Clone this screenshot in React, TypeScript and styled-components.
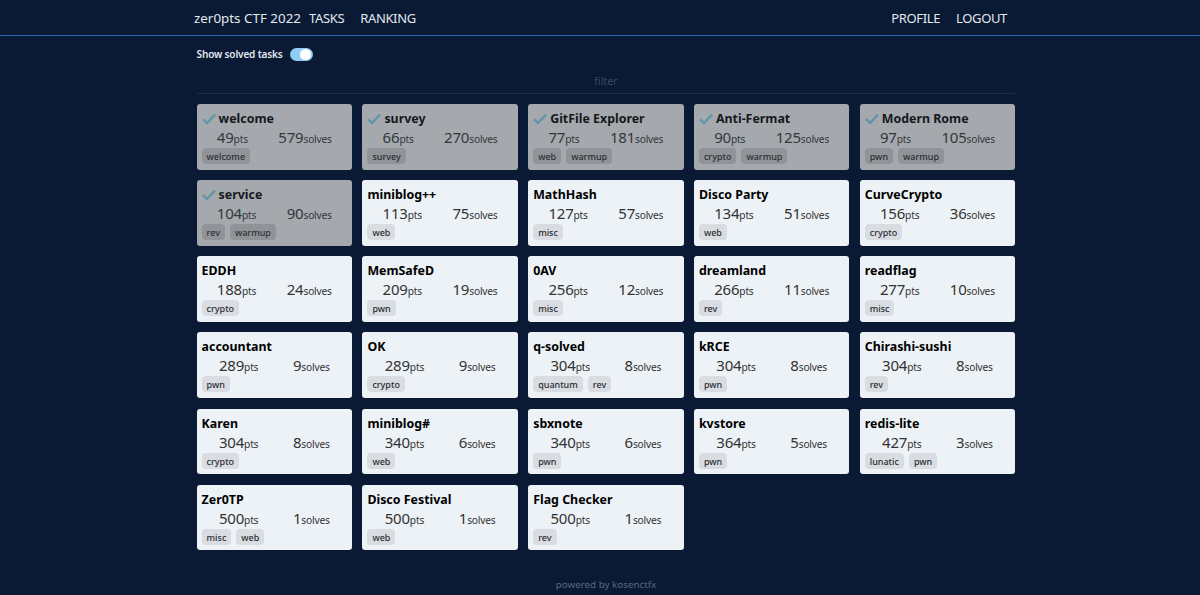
import React from "react";
import styled, { createGlobalStyle } from "styled-components";

const Global = createGlobalStyle`
  html, body { margin: 0; padding: 0; background: #0a1a34; }
  body { font-family: "Noto Sans", "Open Sans", "Liberation Sans", sans-serif; }
  * { box-sizing: border-box; }
`;

const Page = styled.div`
  width: 1200px;
  height: 595px;
  overflow: hidden;
  background: #0a1a34;
  color: #e2e8f0;
  display: flex;
  flex-direction: column;
`;

const NavBar = styled.nav`
  height: 36px;
  flex: none;
  border-bottom: 1px solid #2b6cb0;
  padding: 0 185px 0 194px;
  display: flex;
  align-items: center;
  justify-content: space-between;
`;

const NavGroup = styled.div`
  display: flex;
`;

const Brand = styled.a`
  font-size: 13.4px;
  line-height: 36px;
  color: #e2e8f0;
  white-space: nowrap;
`;

const NavLink = styled.a`
  padding: 0 8px;
  font-size: 13px;
  letter-spacing: -0.35px;
  line-height: 36px;
  color: #e2e8f0;
  white-space: nowrap;
`;

const Main = styled.main`
  width: 818.6px;
  margin-left: 196.6px;
  flex: 1;
  display: flex;
  flex-direction: column;
`;

const ToggleRow = styled.label`
  height: 36px;
  display: flex;
  align-items: center;
  gap: 7px;
  font-size: 10px;
  letter-spacing: -0.15px;
  font-weight: 600;
  color: #e2e8f0;
`;

const Toggle = styled.span`
  position: relative;
  width: 23px;
  height: 13px;
  border-radius: 7px;
  background: #90cdf4;
  &::after {
    content: "";
    position: absolute;
    right: 1.5px;
    top: 1px;
    width: 11px;
    height: 11px;
    border-radius: 50%;
    background: #fff;
  }
`;

const FilterBox = styled.div`
  height: 22px;
  border-bottom: 1px solid #1f2d44;
  text-align: center;
  font-size: 10.5px;
  line-height: 18px;
  color: #3a4658;
`;

const Grid = styled.div`
  margin-top: 10.2px;
  display: grid;
  grid-template-columns: repeat(5, 155.4px);
  column-gap: 10.4px;
  row-gap: 10.3px;
`;

const Card = styled.div<{ $solved?: boolean }>`
  height: 65.8px;
  border-radius: 3px;
  padding: 5px 5px 0;
  background: ${(p) => (p.$solved ? "#a5a9ae" : "#edf2f7")};
  color: ${(p) => (p.$solved ? "#15181c" : "#000")};
  display: flex;
  flex-direction: column;
`;

const Title = styled.div`
  height: 19px;
  display: flex;
  align-items: center;
  gap: 3px;
  font-size: 12.4px;
  font-weight: 700;
  white-space: nowrap;
`;

const Stats = styled.div`
  height: 20px;
  display: flex;
  justify-content: space-around;
  align-items: baseline;
`;

const Stat = styled.div<{ $solved?: boolean }>`
  font-size: 15px;
  letter-spacing: -0.2px;
  line-height: 18px;
  color: ${(p) => (p.$solved ? "#33373c" : "#333")};
  white-space: nowrap;
`;

const Unit = styled.span`
  font-size: 10.2px;
  letter-spacing: -0.2px;
`;

const Tags = styled.div`
  display: flex;
  gap: 5px;
`;

const Tag = styled.span<{ $solved?: boolean }>`
  height: 16px;
  padding: 0 5px;
  border-radius: 4px;
  font-size: 9px;
  font-weight: 500;
  line-height: 17px;
  background: ${(p) => (p.$solved ? "#909499" : "#d9dce1")};
  color: ${(p) => (p.$solved ? "#2c2f33" : "#2a2d33")};
`;

const Footer = styled.footer`
  position: absolute;
  top: 577px;
  left: 6px;
  width: 1200px;
  text-align: center;
  font-size: 9.8px;
  line-height: 16px;
  color: #5a667a;
`;

const Check = () => (
  <svg width="14" height="14" viewBox="0 0 14 14" fill="none" aria-hidden="true" style={{ flex: "none" }}>
    <path d="M1 7.2 L5 11 L13 2.6" stroke="#5f96a8" strokeWidth="2.4" />
  </svg>
);

type Task = { name: string; pts: number; solves: number; tags: string[]; solved?: boolean };

const tasks: Task[] = [
  { name: "welcome", pts: 49, solves: 579, tags: ["welcome"], solved: true },
  { name: "survey", pts: 66, solves: 270, tags: ["survey"], solved: true },
  { name: "GitFile Explorer", pts: 77, solves: 181, tags: ["web", "warmup"], solved: true },
  { name: "Anti-Fermat", pts: 90, solves: 125, tags: ["crypto", "warmup"], solved: true },
  { name: "Modern Rome", pts: 97, solves: 105, tags: ["pwn", "warmup"], solved: true },
  { name: "service", pts: 104, solves: 90, tags: ["rev", "warmup"], solved: true },
  { name: "miniblog++", pts: 113, solves: 75, tags: ["web"] },
  { name: "MathHash", pts: 127, solves: 57, tags: ["misc"] },
  { name: "Disco Party", pts: 134, solves: 51, tags: ["web"] },
  { name: "CurveCrypto", pts: 156, solves: 36, tags: ["crypto"] },
  { name: "EDDH", pts: 188, solves: 24, tags: ["crypto"] },
  { name: "MemSafeD", pts: 209, solves: 19, tags: ["pwn"] },
  { name: "0AV", pts: 256, solves: 12, tags: ["misc"] },
  { name: "dreamland", pts: 266, solves: 11, tags: ["rev"] },
  { name: "readflag", pts: 277, solves: 10, tags: ["misc"] },
  { name: "accountant", pts: 289, solves: 9, tags: ["pwn"] },
  { name: "OK", pts: 289, solves: 9, tags: ["crypto"] },
  { name: "q-solved", pts: 304, solves: 8, tags: ["quantum", "rev"] },
  { name: "kRCE", pts: 304, solves: 8, tags: ["pwn"] },
  { name: "Chirashi-sushi", pts: 304, solves: 8, tags: ["rev"] },
  { name: "Karen", pts: 304, solves: 8, tags: ["crypto"] },
  { name: "miniblog#", pts: 340, solves: 6, tags: ["web"] },
  { name: "sbxnote", pts: 340, solves: 6, tags: ["pwn"] },
  { name: "kvstore", pts: 364, solves: 5, tags: ["pwn"] },
  { name: "redis-lite", pts: 427, solves: 3, tags: ["lunatic", "pwn"] },
  { name: "Zer0TP", pts: 500, solves: 1, tags: ["misc", "web"] },
  { name: "Disco Festival", pts: 500, solves: 1, tags: ["web"] },
  { name: "Flag Checker", pts: 500, solves: 1, tags: ["rev"] },
];

export default function App() {
  return (
    <Page>
      <Global />
      <NavBar>
        <NavGroup>
          <Brand>zer0pts CTF 2022</Brand>
          <NavLink>TASKS</NavLink>
          <NavLink>RANKING</NavLink>
        </NavGroup>
        <NavGroup>
          <NavLink>PROFILE</NavLink>
          <NavLink>LOGOUT</NavLink>
        </NavGroup>
      </NavBar>
      <Main>
        <ToggleRow>
          Show solved tasks
          <Toggle />
        </ToggleRow>
        <FilterBox>filter</FilterBox>
        <Grid>
          {tasks.map((t) => (
            <Card key={t.name} $solved={t.solved}>
              <Title>
                {t.solved && <Check />}
                {t.name}
              </Title>
              <Stats>
                <Stat $solved={t.solved}>
                  {t.pts}
                  <Unit>pts</Unit>
                </Stat>
                <Stat $solved={t.solved}>
                  {t.solves}
                  <Unit>solves</Unit>
                </Stat>
              </Stats>
              <Tags>
                {t.tags.map((tag) => (
                  <Tag key={tag} $solved={t.solved}>
                    {tag}
                  </Tag>
                ))}
              </Tags>
            </Card>
          ))}
        </Grid>
      </Main>
      <Footer>powered by kosenctfx</Footer>
    </Page>
  );
}
